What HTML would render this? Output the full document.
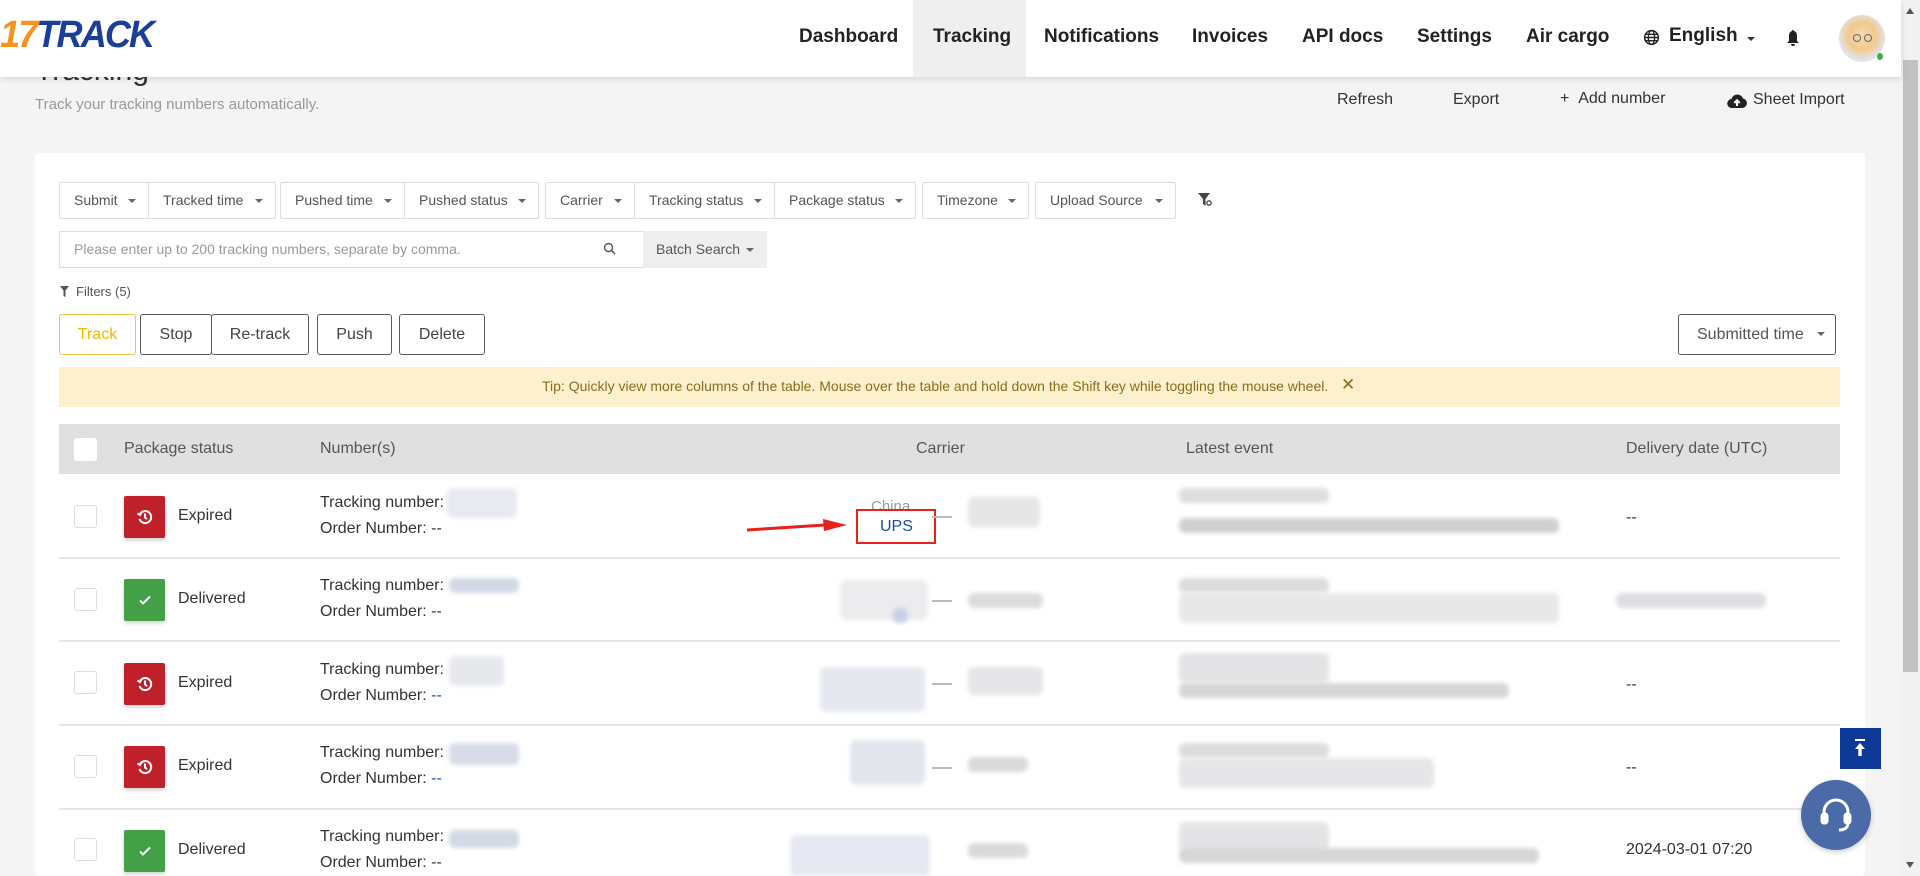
<!DOCTYPE html>
<html style="overflow:hidden;height:876px"><head><meta charset="utf-8"><style>
*{box-sizing:border-box;margin:0;padding:0}
body{width:1920px;height:876px;overflow:hidden;background:#f4f4f4;font-family:"Liberation Sans",Arial,sans-serif;color:#333;position:relative}
.a{position:absolute;white-space:nowrap}
.hdr{position:absolute;left:0;top:0;width:1901px;height:77px;background:#fff;box-shadow:0 2px 6px rgba(0,0,0,.12);z-index:5}
.nav{position:absolute;top:26px;font-size:19px;font-weight:bold;color:#222}
.card{position:absolute;left:35px;top:153px;width:1830px;height:723px;background:#fff;border-radius:4px}
.fb{position:absolute;top:182px;height:37px;border:1px solid #ddd;font-size:14px;color:#555;line-height:35px;padding-left:14px;border-radius:2px}
.fb:after{content:"";position:absolute;right:12px;top:16px;border:4px solid transparent;border-top-color:#666}
.btn{position:absolute;top:314px;height:41px;border:1px solid #5a5a5a;border-radius:3px;font-size:16px;color:#444;line-height:39px;text-align:center}
.th{position:absolute;top:424px;left:59px;width:1781px;height:50px;background:#e0e0e0}
.thc{position:absolute;top:440px;font-size:16px;color:#555}
.cb{position:absolute;left:74px;width:23px;height:23px;border:1px solid #ddd;border-radius:3px;background:#fff}
.rl{position:absolute;left:59px;width:1781px;height:2px;background:#e6e6e6}
.bd{position:absolute;left:124px;width:41px;height:42px;border-radius:2px;box-shadow:0 2px 4px rgba(0,0,0,.2)}
.st{position:absolute;left:178px;font-size:16px;color:#333}
.tn{position:absolute;left:320px;font-size:16px;color:#333}
.bl{position:absolute;filter:blur(2px);border-radius:6px}
</style></head><body>
<div class="hdr">
<div class="a" style="left:0;top:14px;font-size:38px;font-weight:bold;font-style:italic;letter-spacing:-2px;transform:scaleX(0.95);transform-origin:left"><span style="color:#f7931e">17</span><span style="color:#1a3f99">TRACK</span></div>
<div class="a" style="left:913px;top:0;width:113px;height:77px;background:#efefef"></div>
<div class="nav a" style="left:799px">Dashboard</div>
<div class="nav a" style="left:933px">Tracking</div>
<div class="nav a" style="left:1044px">Notifications</div>
<div class="nav a" style="left:1192px">Invoices</div>
<div class="nav a" style="left:1302px">API docs</div>
<div class="nav a" style="left:1417px">Settings</div>
<div class="nav a" style="left:1526px">Air cargo</div>
<svg class="a" style="left:1643px;top:29px" width="17" height="17" viewBox="0 0 16 16" fill="none" stroke="#222" stroke-width="1.3"><circle cx="8" cy="8" r="6.5"/><ellipse cx="8" cy="8" rx="3" ry="6.5"/><path d="M1.5 8h13M2.5 5h11M2.5 11h11"/></svg>
<div class="nav a" style="left:1669px;top:25px">English</div>
<div class="a" style="left:1747px;top:37px;border:4px solid transparent;border-top-color:#333"></div>
<svg class="a" style="left:1787px;top:29px" width="12" height="18" viewBox="0 0 12 18"><path d="M6 1c-.8 0-1 .6-1 1C2.5 2.8 2 5 2 7v5l-2 2h12l-2-2V7c0-2-.5-4.2-3-5 0-.4-.2-1-1-1zM4 15a2 2 0 0 0 4 0z" fill="#222"/></svg>
<div class="a" style="left:1839px;top:15px;width:46px;height:47px;border-radius:50%;background:radial-gradient(circle at 50% 45%,#f7dcb0 0,#f1c98e 40%,#dfe6ee 70%,#eef2f6 100%)"></div>
<div class="a" style="left:1853px;top:34px;width:8px;height:8px;border:1.5px solid #667;border-radius:50%"></div>
<div class="a" style="left:1864px;top:34px;width:8px;height:8px;border:1.5px solid #667;border-radius:50%"></div>
<div class="a" style="left:1877px;top:53px;width:6px;height:7px;border-radius:50%;background:#3cb04a"></div>
</div>
<div class="a" style="left:1901px;top:0;width:19px;height:876px;background:#f1f1f1"></div>
<div class="a" style="left:1903px;top:60px;width:15px;height:612px;background:#c1c1c1"></div>
<div class="a" style="left:1906px;top:8px;border:4px solid transparent;border-bottom-color:#555;border-width:0 4px 6px"></div>
<div class="a" style="left:1906px;top:862px;border:4px solid transparent;border-top-color:#555;border-width:6px 4px 0"></div>

<div class="a" style="left:35px;top:54px;font-size:30px;color:#333">Tracking</div>
<div class="a" style="left:35px;top:96px;font-size:15px;color:#999">Track your tracking numbers automatically.</div>
<div class="a" style="left:1337px;top:91px;font-size:16px">Refresh</div>
<div class="a" style="left:1453px;top:91px;font-size:16px">Export</div>
<div class="a" style="left:1560px;top:90px;font-size:16px">+&nbsp;&nbsp;Add number</div>
<svg class="a" style="left:1727px;top:93px" width="20" height="16" viewBox="0 0 20 16"><path d="M5 15a4.5 4.5 0 0 1-.5-9A6 6 0 0 1 16 5.5 4.8 4.8 0 0 1 15.5 15z" fill="#222"/><path d="M10 13V7.5M7.3 10l2.7-2.8 2.7 2.8" stroke="#fff" stroke-width="2" fill="none"/></svg>
<div class="a" style="left:1753px;top:91px;font-size:16px">Sheet Import</div>

<div class="card"></div>
<div class="fb" style="left:59px;width:90px">Submit</div>
<div class="fb" style="left:148px;width:128px">Tracked time</div>
<div class="fb" style="left:280px;width:125px">Pushed time</div>
<div class="fb" style="left:404px;width:135px">Pushed status</div>
<div class="fb" style="left:545px;width:90px">Carrier</div>
<div class="fb" style="left:634px;width:141px">Tracking status</div>
<div class="fb" style="left:774px;width:142px">Package status</div>
<div class="fb" style="left:922px;width:107px">Timezone</div>
<div class="fb" style="left:1035px;width:141px">Upload Source</div>
<svg class="a" style="left:1197px;top:192px" width="16" height="16" viewBox="0 0 16 16"><path d="M1 1h12L8.5 7v7L6 12V7z" fill="#444"/><circle cx="12" cy="11" r="2.2" fill="none" stroke="#444" stroke-width="1.3"/></svg>
<div class="a" style="left:59px;top:231px;width:585px;height:37px;border:1px solid #ddd;font-size:14px;color:#999;line-height:35px;padding-left:14px">Please enter up to 200 tracking numbers, separate by comma.</div>
<svg class="a" style="left:603px;top:242px" width="14" height="14" viewBox="0 0 14 14" fill="none" stroke="#555" stroke-width="1.4"><circle cx="5.5" cy="5.5" r="4"/><path d="M8.5 8.5l3.5 3.5"/></svg>
<div class="a" style="left:643px;top:231px;width:124px;height:37px;background:#eee;font-size:14px;color:#555;line-height:37px;padding-left:13px">Batch Search</div>
<div class="a" style="left:746px;top:248px;border:4px solid transparent;border-top-color:#666"></div>
<svg class="a" style="left:60px;top:286px" width="9" height="11" viewBox="0 0 9 11"><path d="M0 0h9L5.5 4.5V11L3.5 10V4.5z" fill="#555"/></svg>
<div class="a" style="left:76px;top:284px;font-size:13px;color:#555">Filters (5)</div>
<div class="btn" style="left:59px;width:77px;border-color:#f5c242;color:#f5b400">Track</div>
<div class="btn" style="left:140px;width:72px">Stop</div>
<div class="btn" style="left:211px;width:98px">Re-track</div>
<div class="btn" style="left:317px;width:75px">Push</div>
<div class="btn" style="left:399px;width:86px">Delete</div>
<div class="btn" style="left:1678px;width:158px;text-align:left;padding-left:18px;color:#555">Submitted time</div>
<div class="a" style="left:1817px;top:332px;border:4px solid transparent;border-top-color:#666"></div>
<div class="a" style="left:59px;top:367px;width:1781px;height:40px;background:#fdf0cc"></div>
<div class="a" style="left:542px;top:378px;font-size:14px;color:#8a6d1e">Tip: Quickly view more columns of the table. Mouse over the table and hold down the Shift key while toggling the mouse wheel.</div>
<div class="a" style="left:1341px;top:375px;font-size:17px;color:#8a6d1e">✕</div>

<div class="th"></div>
<div class="cb" style="top:438px;border:none"></div>
<div class="thc" style="left:124px">Package status</div>
<div class="thc" style="left:320px">Number(s)</div>
<div class="thc" style="left:916px">Carrier</div>
<div class="thc" style="left:1186px">Latest event</div>
<div class="thc" style="left:1626px">Delivery date (UTC)</div>

<div class="rl" style="top:557px"></div><div class="rl" style="top:640px"></div><div class="rl" style="top:724px"></div><div class="rl" style="top:808px"></div>

<div class="cb" style="top:505px"></div><div class="cb" style="top:588px"></div><div class="cb" style="top:671px"></div><div class="cb" style="top:755px"></div><div class="cb" style="top:838px"></div>
<div class="bd" style="top:496px;background:#c0202a"></div>
<div class="bd" style="top:579px;background:#43a047"></div>
<div class="bd" style="top:663px;background:#c0202a"></div>
<div class="bd" style="top:746px;background:#c0202a"></div>
<div class="bd" style="top:830px;background:#43a047"></div>
<svg class="a" style="left:136px;top:508px" width="18" height="18" viewBox="0 0 18 18" fill="none" stroke="#fff" stroke-width="2"><path d="M4 6a6 6 0 1 1-.5 5"/><path d="M1.5 5.5l2.5 1.5 1.5-2.5"/><path d="M9 5.5v4l2 1.5"/></svg>
<svg class="a" style="left:136px;top:675px" width="18" height="18" viewBox="0 0 18 18" fill="none" stroke="#fff" stroke-width="2"><path d="M4 6a6 6 0 1 1-.5 5"/><path d="M1.5 5.5l2.5 1.5 1.5-2.5"/><path d="M9 5.5v4l2 1.5"/></svg>
<svg class="a" style="left:136px;top:758px" width="18" height="18" viewBox="0 0 18 18" fill="none" stroke="#fff" stroke-width="2"><path d="M4 6a6 6 0 1 1-.5 5"/><path d="M1.5 5.5l2.5 1.5 1.5-2.5"/><path d="M9 5.5v4l2 1.5"/></svg>
<svg class="a" style="left:137px;top:592px" width="16" height="16" viewBox="0 0 16 16" fill="none" stroke="#fff" stroke-width="2"><path d="M3 8.5l3 3 7-7"/></svg>
<svg class="a" style="left:137px;top:843px" width="16" height="16" viewBox="0 0 16 16" fill="none" stroke="#fff" stroke-width="2"><path d="M3 8.5l3 3 7-7"/></svg>
<div class="st" style="top:507px">Expired</div>
<div class="st" style="top:590px">Delivered</div>
<div class="st" style="top:674px">Expired</div>
<div class="st" style="top:757px">Expired</div>
<div class="st" style="top:841px">Delivered</div>

<div class="tn" style="top:494px">Tracking number:</div><div class="tn" style="top:520px">Order Number: --</div>
<div class="tn" style="top:577px">Tracking number:</div><div class="tn" style="top:603px">Order Number: --</div>
<div class="tn" style="top:661px">Tracking number:</div><div class="tn" style="top:687px">Order Number: <span style="color:#1a4fa0">--</span></div>
<div class="tn" style="top:744px">Tracking number:</div><div class="tn" style="top:770px">Order Number: <span style="color:#1a4fa0">--</span></div>
<div class="tn" style="top:828px">Tracking number:</div><div class="tn" style="top:854px">Order Number: --</div>
<div class="bl" style="left:447px;top:488px;width:70px;height:30px;background:#e8eaf0"></div>
<div class="bl" style="left:449px;top:578px;width:70px;height:15px;background:#d2d8e6"></div>
<div class="bl" style="left:449px;top:656px;width:55px;height:30px;background:#e6e8ee"></div>
<div class="bl" style="left:449px;top:743px;width:70px;height:22px;background:#d8dce8"></div>
<div class="bl" style="left:449px;top:830px;width:70px;height:18px;background:#d4d9e6"></div>

<div class="a" style="left:871px;top:498px;font-size:15px;color:#999">China</div>
<div class="a" style="left:856px;top:509px;width:80px;height:35px;border:2px solid #e8221b"></div>
<div class="a" style="left:880px;top:518px;font-size:16px;color:#1a4fa0">UPS</div>
<svg class="a" style="left:745px;top:518px" width="104" height="16" viewBox="0 0 104 16"><path d="M2 12L80 7" stroke="#e8221b" stroke-width="3"/><path d="M78 1l24 6-23 6z" fill="#e8221b"/></svg>
<div class="bl" style="left:968px;top:497px;width:72px;height:30px;background:#e6e6e8"></div>
<div class="bl" style="left:840px;top:580px;width:88px;height:40px;background:#ececee"></div>
<div class="bl" style="left:893px;top:608px;width:15px;height:15px;background:#c8d0e4"></div>
<div class="bl" style="left:968px;top:593px;width:75px;height:15px;background:#dcdcdc"></div>
<div class="bl" style="left:820px;top:667px;width:105px;height:45px;background:#e6e8f0"></div>
<div class="bl" style="left:968px;top:667px;width:75px;height:28px;background:#e6e6e8"></div>
<div class="bl" style="left:850px;top:740px;width:75px;height:45px;background:#e4e6ee"></div>
<div class="bl" style="left:968px;top:757px;width:60px;height:15px;background:#dadada"></div>
<div class="bl" style="left:790px;top:835px;width:140px;height:41px;background:#e6e9f2"></div>
<div class="bl" style="left:968px;top:843px;width:60px;height:15px;background:#dadada"></div>
<div class="a" style="left:932px;top:516px;width:20px;height:2px;background:#bbb"></div>
<div class="a" style="left:932px;top:600px;width:20px;height:2px;background:#bbb"></div>
<div class="a" style="left:932px;top:683px;width:20px;height:2px;background:#bbb"></div>
<div class="a" style="left:932px;top:767px;width:20px;height:2px;background:#bbb"></div>

<div class="bl" style="left:1179px;top:488px;width:150px;height:15px;background:#dedee0"></div>
<div class="bl" style="left:1179px;top:518px;width:380px;height:15px;background:#d0d0d2"></div>
<div class="bl" style="left:1179px;top:578px;width:150px;height:15px;background:#dcdcdc"></div>
<div class="bl" style="left:1179px;top:593px;width:380px;height:30px;background:#e8e8ea"></div>
<div class="bl" style="left:1179px;top:653px;width:150px;height:30px;background:#e4e4e6"></div>
<div class="bl" style="left:1179px;top:683px;width:330px;height:15px;background:#d6d6d8"></div>
<div class="bl" style="left:1179px;top:743px;width:150px;height:15px;background:#dcdcdc"></div>
<div class="bl" style="left:1179px;top:758px;width:255px;height:30px;background:#e6e6e8"></div>
<div class="bl" style="left:1179px;top:822px;width:150px;height:30px;background:#e4e4e6"></div>
<div class="bl" style="left:1179px;top:848px;width:360px;height:15px;background:#d6d6d8"></div>
<div class="bl" style="left:1616px;top:593px;width:150px;height:15px;background:#dedee2"></div>

<div class="a" style="left:1626px;top:509px;font-size:16px;color:#333">--</div>
<div class="a" style="left:1626px;top:676px;font-size:16px;color:#333">--</div>
<div class="a" style="left:1626px;top:759px;font-size:16px;color:#333">--</div>
<div class="a" style="left:1626px;top:841px;font-size:16px;color:#333">2024-03-01 07:20</div>

<div class="a" style="left:1840px;top:728px;width:41px;height:41px;background:#0d3a96"></div>
<svg class="a" style="left:1852px;top:738px" width="16" height="20" viewBox="0 0 16 20"><path d="M3 2h10" stroke="#fff" stroke-width="2"/><path d="M8 5l-5 6h3.3v7h3.4v-7H13z" fill="#fff"/></svg>
<div class="a" style="left:1801px;top:780px;width:70px;height:70px;border-radius:50%;background:#4b6aa8;box-shadow:0 2px 6px rgba(0,0,0,.2)"></div>
<svg class="a" style="left:1818px;top:796px" width="36" height="38" viewBox="0 0 36 38" fill="none" stroke="#fff" stroke-width="3"><path d="M6 20v-4a12 12 0 0 1 24 0v4"/><rect x="4" y="18" width="5" height="9" rx="2" fill="#fff"/><rect x="27" y="18" width="5" height="9" rx="2" fill="#fff"/><path d="M30 27c0 5-4 7-9 7"/></svg>
</body></html>
